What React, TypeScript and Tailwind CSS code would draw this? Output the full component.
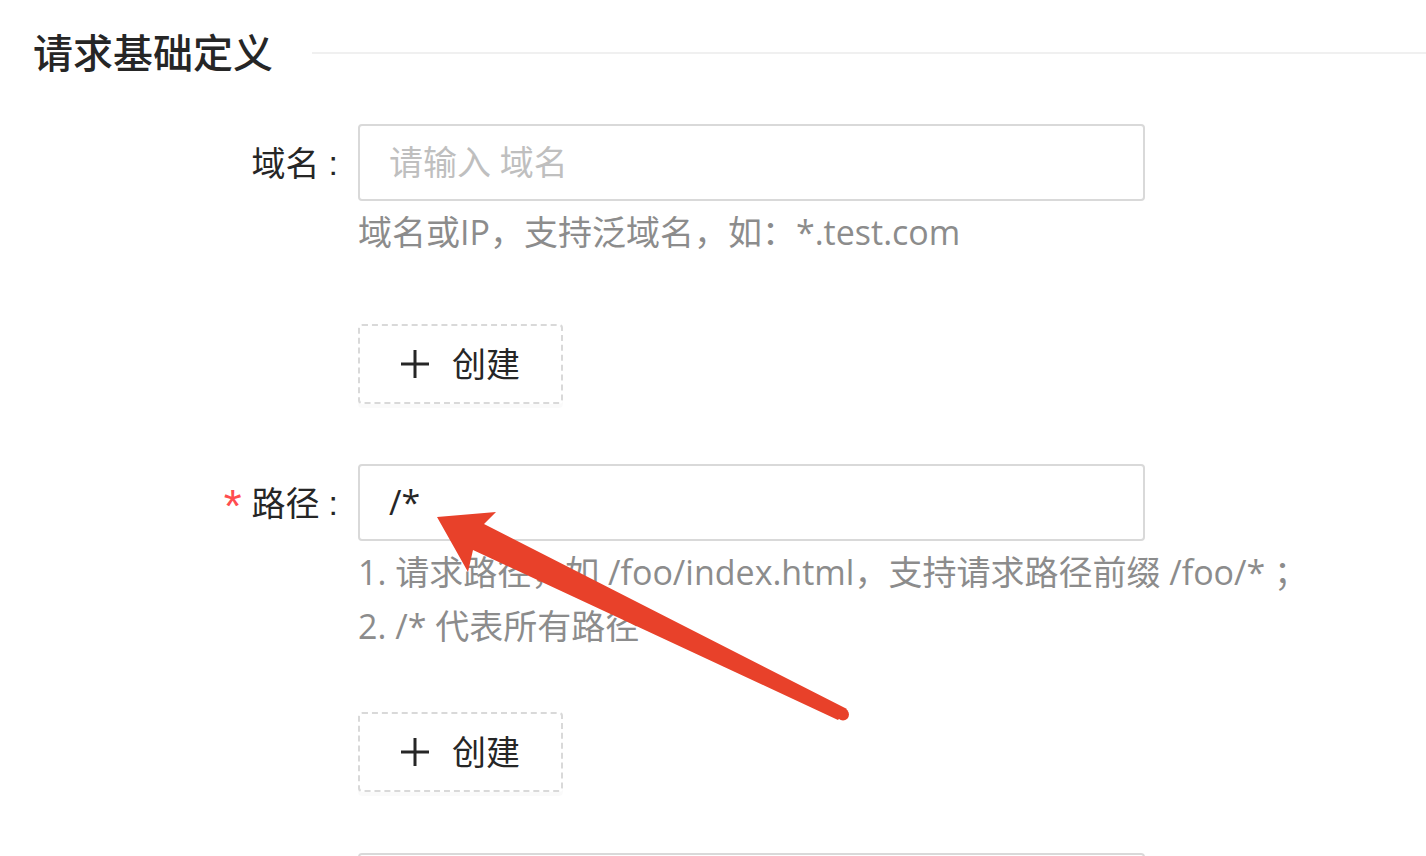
import React from "react";

const font = { fontFamily: '"Open Sans", "Noto Sans CJK SC", sans-serif' };

function PlusIcon() {
  return (
    <svg width="28" height="28" viewBox="0 0 28 28" className="shrink-0">
      <path d="M0 14H28M14 0V28" stroke="#262626" strokeWidth="3" fill="none" />
    </svg>
  );
}

function CreateButton() {
  return (
    <div className="flex h-[80px] w-[205px] items-center justify-center gap-[23px] rounded-[4px] border-2 border-dashed border-[#d9d9d9] bg-white text-[34px] text-[#262626] shadow-[0_4px_0_rgba(0,0,0,0.02)]">
      <PlusIcon />
      <span className="leading-none">创建</span>
    </div>
  );
}

function Label({ text, required }: { text: string; required?: boolean }) {
  return (
    <div className="flex h-[77px] w-[358px] shrink-0 items-center justify-end pr-[20px] text-[34px] text-[#262626]">
      {required && (
        <span
          className="mr-[10px] mt-[6px] text-[46px] leading-none text-[#ff4d4f]"
          style={{ fontFamily: '"Liberation Sans", sans-serif' }}
        >
          *
        </span>
      )}
      <span className="leading-none">{text}</span>
      <span className="ml-[9px] leading-none" style={{ fontFamily: '"Liberation Sans", sans-serif' }}>:</span>
    </div>
  );
}

function Input({ value, placeholder }: { value?: string; placeholder?: string }) {
  return (
    <div className="flex h-[77px] w-[787px] items-center rounded-[4px] border-2 border-[#d9d9d9] px-[29px] text-[34px]">
      {value ? (
        <span className="text-[#262626]">{value}</span>
      ) : (
        <span className="text-[#bfbfbf]">{placeholder}</span>
      )}
    </div>
  );
}

export default function App() {
  return (
    <div className="relative h-[856px] w-[1426px] overflow-hidden bg-white" style={font}>
      {/* Section header */}
      <div className="flex h-[106px] items-center pl-[33px]">
        <h2 className="text-[40px] font-medium leading-none text-[#262626]">请求基础定义</h2>
        <div className="ml-[39px] h-[2px] flex-1 bg-[#f0f0f0]" />
      </div>

      {/* 域名 */}
      <div className="mt-[18px] flex">
        <Label text="域名" />
        <div className="flex flex-col">
          <Input placeholder="请输入 域名" />
          <div className="mt-[4px] whitespace-nowrap text-[34px] leading-[54px] text-[#8c8c8c]">域名或IP，支持泛域名，如：*.test.com</div>
          <div className="mt-[65px]">
            <CreateButton />
          </div>
        </div>
      </div>

      {/* 路径 */}
      <div className="mt-[60px] flex">
        <Label text="路径" required />
        <div className="flex flex-col">
          <Input value="/*" />
          <div className="mt-[4px] text-[34px] leading-[54px] text-[#8c8c8c]">
            <div className="whitespace-nowrap">1. 请求路径，如 /foo/index.html，支持请求路径前缀 /foo/* ；</div>
            <div className="whitespace-nowrap">2. /* 代表所有路径</div>
          </div>
          <div className="mt-[59px]">
            <CreateButton />
          </div>
          <div className="mt-[61px] h-[77px] w-[787px] rounded-[4px] border-2 border-[#d9d9d9]" />
        </div>
      </div>

      {/* Annotation arrow */}
      <svg className="pointer-events-none absolute left-0 top-0" width="1426" height="856" viewBox="0 0 1426 856">
        <polygon
          points="437,517 496,512 484,524 847,709 838,720 473,550 468,572"
          fill="#e8412a"
        />
        <circle cx="843" cy="714.5" r="6" fill="#e8412a" />
      </svg>
    </div>
  );
}
